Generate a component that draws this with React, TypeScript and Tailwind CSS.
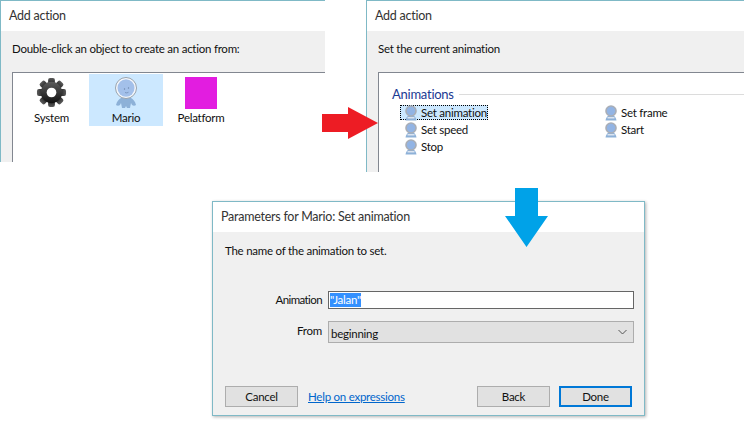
const font = { fontFamily: 'Lato, Roboto, sans-serif' };

function Gear() {
  const teeth = [0, 45, 90, 135, 180, 225, 270, 315];
  return (
    <svg width="31" height="31" viewBox="0 0 32 32">
      <defs>
        <linearGradient id="g" x1="0" y1="0" x2="0" y2="1">
          <stop offset="0" stopColor="#5c5c5c" />
          <stop offset="1" stopColor="#111" />
        </linearGradient>
      </defs>
      <g fill="url(#g)">
        {teeth.map((a) => (
          <rect key={a} x="12.5" y="1" width="7" height="8" rx="2" transform={`rotate(${a} 16 16)`} />
        ))}
        <circle cx="16" cy="16" r="11" />
      </g>
      <circle cx="16" cy="16" r="5" fill="#fff" />
    </svg>
  );
}

function Astronaut({ size = 32 }: { size?: number }) {
  return (
    <svg width={size * 0.75} height={size} viewBox="0 0 24 32">
      <path d="M7 21c-2 1-4 3-5 7 1 1 3 1 4 0l1-2 1 5h3l1-2 1 2h3l1-5 1 2c1 1 3 1 4 0-1-4-3-6-5-7z" fill="#8db1d8" />
      <ellipse cx="12" cy="11" rx="10.500" ry="10.500" fill="#f4f7fb" stroke="#9aa3ad" strokeWidth="1" />
      <ellipse cx="12" cy="11" rx="8.500" ry="8.800" fill="#a3c0ea" />
      <circle cx="14.500" cy="11" r="0.700" fill="#6d87ad" />
      <circle cx="10.500" cy="12" r="0.700" fill="#6d87ad" />
      <path d="M11 15.500q2 1 3.500-.3" stroke="#6d87ad" strokeWidth="0.7" fill="none" />
    </svg>
  );
}

function SmallIcon() {
  return (
    <svg width="12" height="16" viewBox="0 0 12 16" className="shrink-0">
      <path d="M3 11c-1 .5-2 2-2.500 4.500h11c-.5-2.500-1.500-4-2.500-4.500z" fill="#8db1d8" />
      <circle cx="6" cy="6" r="5.800" fill="#a9aeb6" />
      <circle cx="6" cy="6" r="4.200" fill="#92b4e4" />
      <rect x="2.500" y="12" width="7" height="1.500" fill="#dbe4f0" />
    </svg>
  );
}

function ActionRow({ label, selected }: { label: string; selected?: boolean }) {
  return (
    <div
      className={`flex h-[15px] items-center gap-1 pl-1 leading-none text-[#111] ${
        selected ? "-ml-px w-[88px] border border-dotted border-black bg-[#cce8ff]" : ""
      }`}
    >
      <SmallIcon />
      <span className="whitespace-nowrap">{label}</span>
    </div>
  );
}

function ObjectItem({ label, className, children }: { label: string; className: string; children: React.ReactNode }) {
  return (
    <div className={`flex h-[52px] flex-col items-center pt-[2px] ${className}`}>
      <div className="flex h-[33px] items-center justify-center">{children}</div>
      <span className="mt-[2px] leading-[14px] text-[#111]">{label}</span>
    </div>
  );
}

function Btn({ label, primary }: { label: string; primary?: boolean }) {
  return (
    <button
      className={`flex h-[21px] w-[73px] items-center justify-center bg-[#e1e1e1] leading-none text-[#111] ${
        primary ? "border-2 border-[#0078d7]" : "border border-[#adadad]"
      }`}
    >
      {label}
    </button>
  );
}

export default function App() {
  return (
    <div className="relative h-[422px] w-[744px] overflow-hidden bg-white text-[11.5px] tracking-[-0.25px]" style={font}>
      {/* Top-left window */}
      <div className="absolute left-0 top-0 flex h-[162px] w-[325px] flex-col border-l border-t border-[#7fb9c6]">
        <div className="flex h-[30px] items-center bg-white pl-2 text-[12.5px] text-[#333]">Add action</div>
        <div className="flex flex-1 flex-col bg-[#f0f0f0] pl-[11px]">
          <div className="flex h-[41px] items-center pb-[6px] text-[#111]">Double-click an object to create an action from:</div>
          <div className="flex flex-1 items-start border-l border-t border-[#828790] bg-white pl-[1px] pt-[1px]">
            <ObjectItem label="System" className="w-[75px]"><Gear /></ObjectItem>
            <ObjectItem label="Mario" className="w-[74px] bg-[#cce8ff]"><Astronaut /></ObjectItem>
            <ObjectItem label="Pelatform" className="w-[76px]"><div className="h-8 w-8 bg-[#e21de0]" /></ObjectItem>
          </div>
        </div>
      </div>

      {/* Top-right window */}
      <div className="absolute left-[366px] top-0 flex h-[172px] w-[378px] flex-col border-l border-t border-[#7fb9c6]">
        <div className="flex h-[30px] items-center bg-white pl-2 text-[12.5px] text-[#333]">Add action</div>
        <div className="flex flex-1 flex-col bg-[#f0f0f0] pl-[11px]">
          <div className="flex h-[41px] items-center pb-[6px] text-[#111]">Set the current animation</div>
          <div className="flex-1 border-l border-t border-[#828790] bg-white pl-[13px] pt-[13px]">
            <div className="flex items-center gap-[5px]">
              <span className="text-[13px] leading-4 text-[#1b3a93]">Animations</span>
              <div className="h-px flex-1 bg-[#dcdcdc]" />
            </div>
            <div className="mt-[3px] grid grid-cols-[200px_1fr] pl-[9px]">
              <div className="flex flex-col gap-[2px]">
                <ActionRow label="Set animation" selected />
                <ActionRow label="Set speed" />
                <ActionRow label="Stop" />
              </div>
              <div className="flex flex-col gap-[2px]">
                <ActionRow label="Set frame" />
                <ActionRow label="Start" />
              </div>
            </div>
          </div>
        </div>
      </div>

      {/* Bottom dialog */}
      <div className="absolute left-[212px] top-[201px] flex h-[215px] w-[433px] flex-col border border-[#7fb9c6] shadow-[1px_1px_3px_rgba(0,0,0,0.3)]">
        <div className="flex h-[30px] items-center bg-white pl-2 text-[12.5px] text-[#333]">Parameters for Mario: Set animation</div>
        <div className="flex flex-1 flex-col bg-[#f0f0f0] pb-2 pl-3 pr-[10px]">
          <div className="flex h-[37px] items-center pl-[-1px] text-[#111]">The name of the animation to set.</div>
          <div className="mt-[22px] flex h-[18px] items-center gap-[6px]">
            <span className="w-[97px] text-right tracking-[-0.6px] text-[#111]">Animation</span>
            <div className="flex h-[18px] w-[306px] items-center border border-[#666] bg-white pl-px">
              <span className="bg-[#3390ff] leading-[14px] text-white">"Jalan"</span>
            </div>
          </div>
          <div className="mt-[12px] flex h-[22px] items-center gap-[6px]">
            <span className="w-[97px] -translate-y-px text-right text-[#111]">From</span>
            <div className="flex h-[22px] w-[306px] items-center justify-between border border-[#adadad] bg-[#e1e1e1] pl-[2px] pr-[6px]">
              <span className="translate-y-0.5 text-[#111]">beginning</span>
              <svg width="9" height="6" viewBox="0 0 9 6"><path d="M.5 1l4 4 4-4" stroke="#555" fill="none" /></svg>
            </div>
          </div>
          <div className="mt-auto flex items-center">
            <Btn label="Cancel" />
            <a className="ml-[10px] text-[#0066cc] underline">Help on expressions</a>
            <div className="ml-auto mr-[2px] flex gap-[9px]">
              <Btn label="Back" />
              <Btn label="Done" primary />
            </div>
          </div>
        </div>
      </div>

      {/* Arrows */}
      <svg className="absolute left-[321px] top-[107px]" width="58" height="33" viewBox="0 0 58 33">
        <path d="M1 7h26V0l30 16L27 32v-7H1z" fill="#ed1c24" />
      </svg>
      <svg className="absolute left-[505px] top-[188px]" width="44" height="60" viewBox="0 0 44 60">
        <path d="M10 0h23v28h10L21.500 59 0 28h10z" fill="#00a2e8" />
      </svg>
    </div>
  );
}
